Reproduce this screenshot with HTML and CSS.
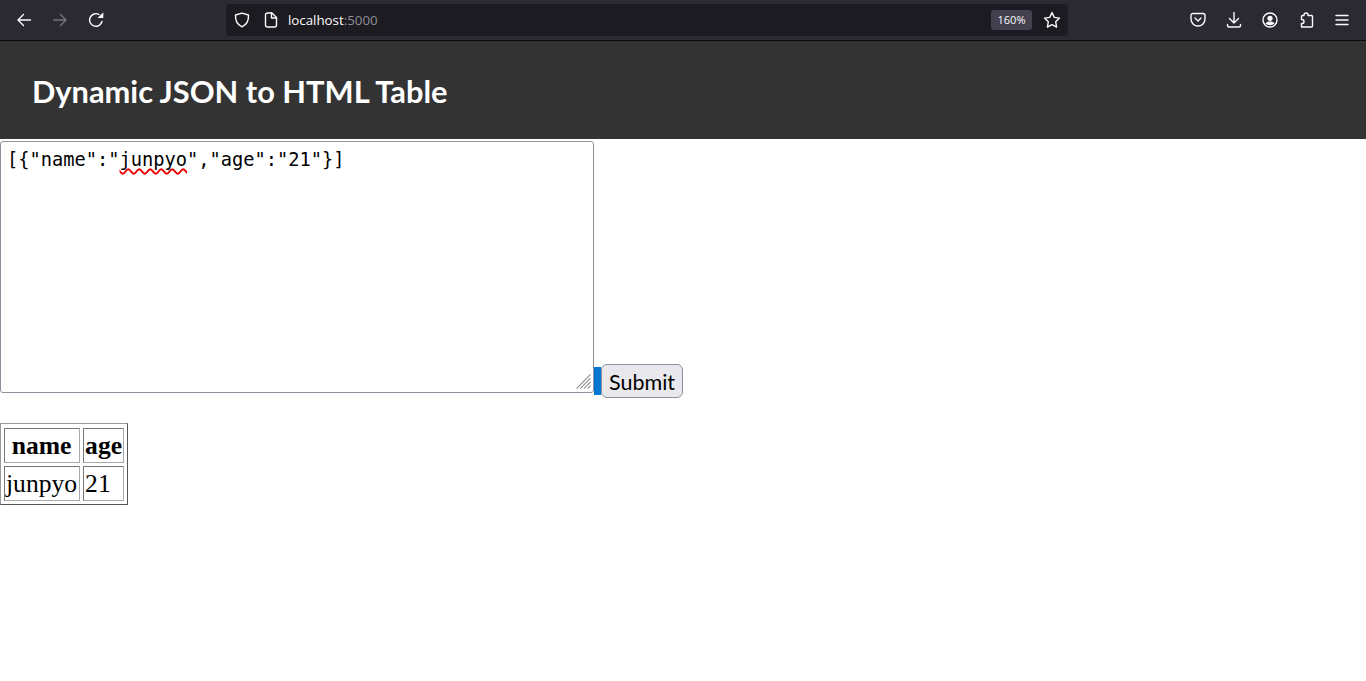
FILE: index.html
```html
<!DOCTYPE html>
<html lang="en">
<head>
<meta charset="utf-8">
<title>Dynamic JSON to HTML Table</title>
<link rel="stylesheet" href="styles.css">
</head>
<body>
<nav class="toolbar">
  <div class="nav-group">
    <svg class="icon" viewBox="0 0 16 16"><path d="M14.500 8H2M7.500 2.500 2 8l5.500 5.500"/></svg>
    <svg class="icon dim" viewBox="0 0 16 16"><path d="M1.500 8H14M8.500 2.500 14 8l-5.500 5.500"/></svg>
    <svg class="icon" viewBox="0 0 16 16"><path d="M14 9.500A6.300 6.300 0 1 1 11 2.500"/><path class="solid" d="M9.500 6h5.800V.2z"/></svg>
  </div>
  <div class="urlbar">
    <svg class="icon shield" viewBox="0 0 16 16"><path d="M8 1.200 14.500 3c.3 5.500-1.500 9.500-6.500 11.800C3 12.500 1.200 8.500 1.500 3z"/></svg>
    <svg class="icon page" viewBox="0 0 16 16"><path d="M2.500 3a2 2 0 0 1 2-2h4.500L13.500 5.500V13a2 2 0 0 1-2 2h-7a2 2 0 0 1-2-2z"/><path d="M8.500 1v5h5"/></svg>
    <span class="host">localhost<span class="port">:5000</span></span>
    <span class="zoom">160%</span>
    <svg class="icon star" viewBox="0 0 18 18"><path d="M9 1.500 11.300 6.400l5.200.7-3.800 3.700.9 5.300L9 13.600l-4.600 2.500.9-5.300L1.500 7.100l5.200-.7z"/></svg>
  </div>
  <div class="tool-group">
    <svg class="icon" viewBox="0 0 16 16"><path d="M3 1.500h10a2 2 0 0 1 2 2v3.500a7 7 0 0 1-14 0V3.500a2 2 0 0 1 2-2z"/><path d="M5 6 8 9l3-3"/></svg>
    <svg class="icon" viewBox="0 0 16 16"><path d="M8 .5v10.500M3.500 6.500 8 11l4.500-4.500M1.500 12.500v1a1.500 1.500 0 0 0 1.500 1.500h10a1.500 1.500 0 0 0 1.500-1.500v-1"/></svg>
    <svg class="icon" viewBox="0 0 16 16"><circle cx="8" cy="8" r="7"/><circle class="solid" cx="8" cy="6.300" r="2.600"/><path class="solid" d="M3.500 11.500c1-1.500 2.500-2 4.500-2s3.500.5 4.500 2c-2.500 2.300-6.500 2.300-9 0z"/></svg>
    <svg class="icon" viewBox="0 0 16 16"><path d="M6 3.500V3a2 2 0 0 1 4 0v.5h3.500a1 1 0 0 1 1 1V14a1 1 0 0 1-1 1H3.500v-3.500H4a2 2 0 0 0 0-4h-.5V4.500a1 1 0 0 1 1-1z"/></svg>
    <svg class="icon" viewBox="0 0 16 16"><path d="M2 3.500h12M2 8h12M2 12.500h12"/></svg>
  </div>
</nav>
<header class="banner"><h1 class="title">Dynamic JSON to HTML Table</h1></header>
<form class="json-form">
  <div class="json-input">[{"name":"<span class="misspelled">junpyo</span>","age":"21"}]<svg class="resizer" viewBox="0 0 16 16"><path d="M15.500 .500 .500 15.500M15.500 4.500l-11 11M15.500 8.500l-7 7M15.500 12.500l-3 3"/></svg></div>
  <span class="focus-bar"></span>
  <button class="submit" type="button">Submit</button>
</form>
<table class="result">
  <tr><th>name</th><th>age</th></tr>
  <tr><td>junpyo</td><td>21</td></tr>
</table>
</body>
</html>
```
FILE: styles.css
```css
html, body { margin: 0; padding: 0; background: #fff; }
body { height: 681px; overflow: hidden; }

.toolbar {
  height: 40px;
  background: #2b2a33;
  border-bottom: 1px solid #0c0c0d;
  display: flex;
  align-items: center;
}
.icon {
  width: 16px;
  height: 16px;
  fill: none;
  stroke: #fbfbfe;
  stroke-width: 1.4;
  stroke-linecap: round;
  stroke-linejoin: round;
  flex: none;
}
.icon .solid { fill: #fbfbfe; stroke: none; }
.icon.dim { stroke: #75747b; }
.nav-group {
  display: flex;
  gap: 20px;
  padding-left: 16px;
  width: 226px;
  box-sizing: border-box;
}
.urlbar {
  width: 842px;
  height: 32px;
  background: #1c1b22;
  border-radius: 4px;
  display: flex;
  align-items: center;
  padding: 0 7px 0 8px;
  box-sizing: border-box;
  font: 13.300px/1 "Open Sans", "Noto Sans", sans-serif;
  color: #fbfbfe;
}
.page { margin-left: 13px; }
.host { margin: 2px 0 0 9px; flex: 1; }
.port { color: #8f8f94; }
.zoom {
  background: #42414d;
  border-radius: 3px;
  font-size: 11px;
  height: 20px;
  line-height: 20px;
  width: 41px;
  text-align: center;
}
.star { width: 18px; height: 18px; margin-left: 11px; }
.tool-group {
  display: flex;
  gap: 20px;
  margin-left: 122px;
}

.banner {
  background: #333;
  height: 98px;
  display: flex;
  align-items: center;
  padding-left: 32px;
}
.title {
  margin: 4px 0 0;
  color: #fff;
  font: 700 30.800px/1 Lato, "Noto Sans", sans-serif;
}

.json-form {
  display: flex;
  align-items: flex-start;
  padding-top: 2px;
  height: 282px;
}
.json-input {
  width: 594px;
  height: 252px;
  box-sizing: border-box;
  border: 1px solid #8f8f9d;
  border-radius: 3px;
  padding: 6px;
  font: 18.700px/24px "DejaVu Sans Mono", monospace;
  color: #000;
  position: relative;
  white-space: pre-wrap;
}
.misspelled {
  text-decoration: underline wavy #e00;
  text-decoration-thickness: 1.500px;
  text-decoration-skip-ink: none;
  text-underline-offset: 2px;
}
.resizer {
  position: absolute;
  right: 2px;
  bottom: 3px;
  width: 15px;
  height: 15px;
  fill: none;
  stroke: #8a8a8a;
  stroke-width: 1.100;
}
.focus-bar {
  width: 7px;
  height: 28px;
  margin-top: 226px;
  background: #0078d4;
}
.submit {
  height: 34px;
  width: 82px;
  margin-top: 223px;
  padding: 3px 0 0;
  background: #e9e9ed;
  border: 1px solid #8f8f9d;
  border-radius: 6px;
  color: #000;
  font: 21.500px/1 Lato, "Noto Sans", sans-serif;
}

.result {
  border: 1px solid #555;
  border-top-color: #999;
  border-left-color: #999;
  border-spacing: 3px;
  padding: 1px 0 0 0;
  font: 25.600px "Liberation Serif", "Times New Roman", serif;
  color: #000;
}
.result th, .result td {
  border: 1px solid #777;
  border-right-color: #aaa;
  border-bottom-color: #aaa;
  padding: 2px 1px 1px 1px;
}
.result th:first-child, .result td:first-child { padding-right: 2px; }
```
